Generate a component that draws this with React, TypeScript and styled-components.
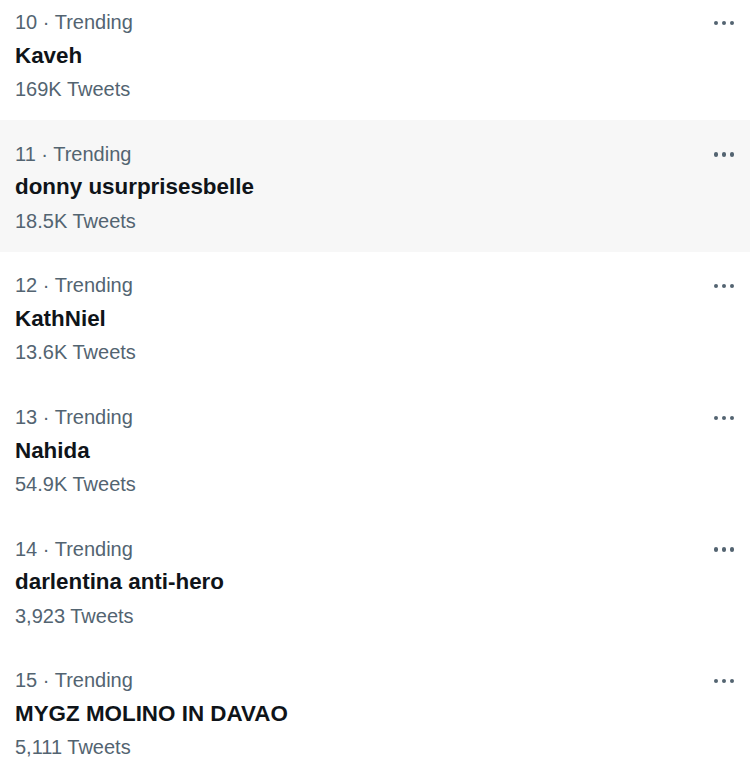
import React from "react";
import styled, { createGlobalStyle } from "styled-components";

const Global = createGlobalStyle`
  html, body { margin: 0; padding: 0; background: #ffffff; }
  body { font-family: "Liberation Sans", Arial, sans-serif; overflow: hidden; }
`;

const List = styled.div`
  width: 750px;
  margin-top: -11.6px;
  display: flex;
  flex-direction: column;
`;

const Row = styled.div<{ $hover?: boolean }>`
  display: flex;
  justify-content: space-between;
  align-items: flex-start;
  padding: 18.85px 16px 13.25px 15px;
  background: ${(p) => (p.$hover ? "#f7f7f7" : "#ffffff")};
`;

const Texts = styled.div`
  display: flex;
  flex-direction: column;
`;

const Meta = styled.div<{ $lh: number }>`
  font-size: 20px;
  line-height: ${(p) => p.$lh}px;
  color: #536471;
`;

const Name = styled.div`
  font-size: 22.4px;
  line-height: 33.5px;
  font-weight: 700;
  color: #0f1419;
`;

const More = styled.div`
  display: flex;
  gap: 3.5px;
  padding-top: 13.5px;
`;

const Dot = styled.span`
  width: 4.5px;
  height: 4.5px;
  border-radius: 50%;
  background: #536471;
`;

const trends = [
  { n: 10, name: "Kaveh", count: "169K Tweets" },
  { n: 11, name: "donny usurprisesbelle", count: "18.5K Tweets", hover: true },
  { n: 12, name: "KathNiel", count: "13.6K Tweets" },
  { n: 13, name: "Nahida", count: "54.9K Tweets" },
  { n: 14, name: "darlentina anti-hero", count: "3,923 Tweets" },
  { n: 15, name: "MYGZ MOLINO IN DAVAO", count: "5,111 Tweets" },
];

export default function App() {
  return (
    <>
      <Global />
      <List>
        {trends.map((t) => (
          <Row key={t.n} $hover={t.hover}>
            <Texts>
              <Meta $lh={31.5}>{t.n} · Trending</Meta>
              <Name>{t.name}</Name>
              <Meta $lh={34.5}>{t.count}</Meta>
            </Texts>
            <More>
              <Dot />
              <Dot />
              <Dot />
            </More>
          </Row>
        ))}
      </List>
    </>
  );
}
